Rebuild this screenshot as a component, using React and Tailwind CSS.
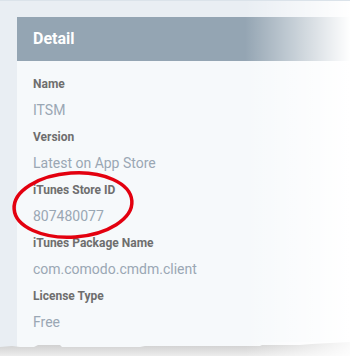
import React from 'react'

const fields = [
  { label: 'Name', value: 'ITSM' },
  { label: 'Version', value: 'Latest on App Store' },
  { label: 'iTunes Store ID', value: '807480077' },
  { label: 'iTunes Package Name', value: 'com.comodo.cmdm.client' },
  { label: 'License Type', value: 'Free' },
]

function TornEdge() {
  return (
    <svg
      className="absolute left-0 bottom-0"
      width="350"
      height="14"
      viewBox="0 0 350 14"
    >
      <defs>
        <linearGradient id="shade" x1="0" y1="0" x2="0" y2="1">
          <stop offset="0" stopColor="#c9c9c9" />
          <stop offset="1" stopColor="#ececec" />
        </linearGradient>
        <linearGradient id="fadeR" x1="0" y1="0" x2="1" y2="0">
          <stop offset="0.7" stopColor="#fff" stopOpacity="0" />
          <stop offset="1" stopColor="#fff" stopOpacity="0.9" />
        </linearGradient>
      </defs>
      <path
        d="M0 5 L12 4 L20 5 L34 5 L38 3 L60 3 L62 5 L100 5 L140 5 L145 4 L200 4 L260 4 L262 3 L300 3 L312 2 L330 1 L350 0 L350 14 L0 14 Z"
        fill="url(#shade)"
      />
      <rect x="0" y="0" width="350" height="14" fill="url(#fadeR)" />
    </svg>
  )
}

export default function App() {
  return (
    <div
      className="relative w-[350px] h-[356px] overflow-hidden bg-[#e9eef3] border-t border-[#dbe3ea]"
      style={{ fontFamily: 'Roboto, "Liberation Sans", sans-serif' }}
    >
      <div className="ml-[17px] mt-[16px] h-full bg-[#f6f9fb]">
        <div className="h-[44px] bg-[#94a5b3] flex items-center pl-[16px]">
          <span className="text-[16px] font-bold text-white">Detail</span>
        </div>
        <div className="pl-[16px] pt-[14px] flex flex-col gap-[8px]">
          {fields.map((f) => (
            <div key={f.label} className="flex flex-col">
              <span className="text-[12px] leading-[18px] font-bold text-[#6e6e6e]">
                {f.label}
              </span>
              <span className="mt-[7px] text-[14px] leading-[20px] text-[#9aa7b4]">
                {f.value}
              </span>
            </div>
          ))}
        </div>
      </div>

      <div className="absolute top-0 right-0 h-full w-[105px] bg-gradient-to-r from-transparent to-white pointer-events-none" />

      <svg
        className="absolute left-0 top-0 pointer-events-none"
        width="350"
        height="356"
      >
        <ellipse
          cx="73"
          cy="204"
          rx="59"
          ry="32"
          transform="rotate(-4 73 204)"
          fill="none"
          stroke="#e3000f"
          strokeWidth="3.5"
        />
      </svg>

      <TornEdge />
    </div>
  )
}
